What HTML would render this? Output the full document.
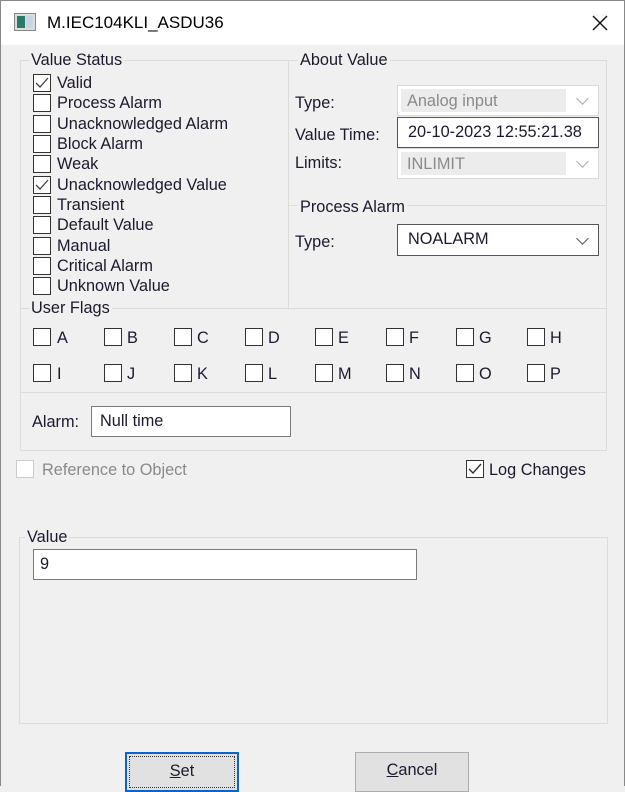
<!DOCTYPE html>
<html><head><meta charset="utf-8"><style>
*{box-sizing:border-box;margin:0;padding:0}
body{width:625px;height:786px;overflow:hidden;background:#f0f0f0;font-family:"Liberation Sans",sans-serif;font-size:16.3px;color:#1a1a2e;position:relative}
.a{position:absolute}
.win{position:absolute;left:0;top:0;width:625px;height:786px;border:1px solid #888;border-bottom:none}
.title{position:absolute;left:1px;top:1px;width:623px;height:44px;background:#fff}
.grp{position:absolute;border:1px solid #dcdcdc}
.lbl{position:absolute;background:#f0f0f0;padding:0 2px;line-height:18px;white-space:nowrap}
.cb{position:absolute;width:18px;height:18px;border:1.5px solid #333;background:#fff}
.t{position:absolute;line-height:18px;white-space:nowrap}
.edit{position:absolute;background:#fff;border:1px solid #7a7a7a;padding-left:10px;line-height:29px;white-space:nowrap;overflow:hidden}
.dis{position:absolute;background:#fff;border:1px solid #d8d8d8}
.dis span{position:absolute;left:3px;top:3px;right:32px;bottom:3px;background:#ececec;color:#8a8a8a;padding-left:6px;line-height:24px}
.chev{position:absolute;right:11px;top:8px;width:9px;height:9px;border-right:1.3px solid #555;border-bottom:1.3px solid #555;transform:rotate(45deg)}
.btn{position:absolute;background:#e1e1e1;border:1px solid #adadad;text-align:center;line-height:34px;height:40px}
</style></head><body>
<div class="win"></div>
<div class="title"></div>
<svg class="a" style="left:14px;top:13px" width="22" height="18"><rect x="0.5" y="0.5" width="21" height="17" fill="#ddd" stroke="#888"/><rect x="3" y="3" width="8" height="12" fill="#2a7a6a"/><rect x="12" y="3" width="7" height="12" fill="#c8d4e0"/></svg>
<div class="t" style="left:47px;top:14px;font-size:17px;color:#000">M.IEC104KLI_ASDU36</div>
<svg class="a" style="left:592px;top:15px" width="16" height="16"><path d="M1 1L15 15M15 1L1 15" stroke="#111" stroke-width="1.4"/></svg>

<div class="grp" style="left:20px;top:60px;width:269px;height:250px;border-bottom:none"></div>
<div class="lbl" style="left:29px;top:51px">Value Status</div>
<div class="grp" style="left:288px;top:60px;width:319px;height:250px;border-bottom:none"></div>
<div class="lbl" style="left:298px;top:51px">About Value</div>
<div class="a" style="left:289px;top:205px;width:318px;height:1px;background:#dcdcdc"></div>
<div class="lbl" style="left:298px;top:198px">Process Alarm</div>

<div class="cb" style="left:33px;top:74px"></div><svg class="a" style="left:35px;top:76px" width="14" height="14"><path d="M1 7L5 11L13 2" stroke="#444" fill="none" stroke-width="1.3"/></svg><div class="t" style="left:57px;top:74px">Valid</div>
<div class="cb" style="left:33px;top:94px"></div><div class="t" style="left:57px;top:94px">Process Alarm</div>
<div class="cb" style="left:33px;top:115px"></div><div class="t" style="left:57px;top:115px">Unacknowledged Alarm</div>
<div class="cb" style="left:33px;top:135px"></div><div class="t" style="left:57px;top:135px">Block Alarm</div>
<div class="cb" style="left:33px;top:155px"></div><div class="t" style="left:57px;top:155px">Weak</div>
<div class="cb" style="left:33px;top:176px"></div><svg class="a" style="left:35px;top:178px" width="14" height="14"><path d="M1 7L5 11L13 2" stroke="#444" fill="none" stroke-width="1.3"/></svg><div class="t" style="left:57px;top:176px">Unacknowledged Value</div>
<div class="cb" style="left:33px;top:196px"></div><div class="t" style="left:57px;top:196px">Transient</div>
<div class="cb" style="left:33px;top:216px"></div><div class="t" style="left:57px;top:216px">Default Value</div>
<div class="cb" style="left:33px;top:237px"></div><div class="t" style="left:57px;top:237px">Manual</div>
<div class="cb" style="left:33px;top:257px"></div><div class="t" style="left:57px;top:257px">Critical Alarm</div>
<div class="cb" style="left:33px;top:277px"></div><div class="t" style="left:57px;top:277px">Unknown Value</div>

<div class="t" style="left:295px;top:94px">Type:</div>
<div class="dis" style="left:397px;top:85px;width:202px;height:31px"><span>Analog input</span><div class="chev" style="border-color:#aaa"></div></div>
<div class="t" style="left:295px;top:126px">Value Time:</div>
<div class="edit" style="left:397px;top:117px;width:202px;height:31px;border-color:#555;padding-left:10px">20-10-2023 12:55:21.38</div>
<div class="t" style="left:295px;top:154px">Limits:</div>
<div class="dis" style="left:397px;top:148px;width:202px;height:31px"><span>INLIMIT</span><div class="chev" style="border-color:#aaa"></div></div>
<div class="t" style="left:295px;top:233px">Type:</div>
<div class="edit" style="left:397px;top:224px;width:202px;height:32px;border-color:#555">NOALARM<div class="chev" style="top:9px"></div></div>

<div class="grp" style="left:20px;top:308px;width:587px;height:143px"></div>
<div class="a" style="left:21px;top:392px;width:585px;height:1px;background:#dcdcdc"></div>
<div class="lbl" style="left:29px;top:299px">User Flags</div>
<div class="cb" style="left:33px;top:328px"></div><div class="t" style="left:57px;top:329px">A</div>
<div class="cb" style="left:104px;top:328px"></div><div class="t" style="left:127px;top:329px">B</div>
<div class="cb" style="left:174px;top:328px"></div><div class="t" style="left:197px;top:329px">C</div>
<div class="cb" style="left:245px;top:328px"></div><div class="t" style="left:268px;top:329px">D</div>
<div class="cb" style="left:315px;top:328px"></div><div class="t" style="left:338px;top:329px">E</div>
<div class="cb" style="left:386px;top:328px"></div><div class="t" style="left:409px;top:329px">F</div>
<div class="cb" style="left:456px;top:328px"></div><div class="t" style="left:479px;top:329px">G</div>
<div class="cb" style="left:527px;top:328px"></div><div class="t" style="left:550px;top:329px">H</div>
<div class="cb" style="left:33px;top:364px"></div><div class="t" style="left:57px;top:365px">I</div>
<div class="cb" style="left:104px;top:364px"></div><div class="t" style="left:127px;top:365px">J</div>
<div class="cb" style="left:174px;top:364px"></div><div class="t" style="left:197px;top:365px">K</div>
<div class="cb" style="left:245px;top:364px"></div><div class="t" style="left:268px;top:365px">L</div>
<div class="cb" style="left:315px;top:364px"></div><div class="t" style="left:338px;top:365px">M</div>
<div class="cb" style="left:386px;top:364px"></div><div class="t" style="left:409px;top:365px">N</div>
<div class="cb" style="left:456px;top:364px"></div><div class="t" style="left:479px;top:365px">O</div>
<div class="cb" style="left:527px;top:364px"></div><div class="t" style="left:550px;top:365px">P</div>
<div class="t" style="left:32px;top:413px">Alarm:</div>
<div class="edit" style="left:91px;top:406px;width:200px;height:31px;padding-left:8px">Null time</div>

<div class="cb" style="left:16px;top:460px;border:1px solid #ccc"></div>
<div class="t" style="left:42px;top:461px;color:#8a8a8a">Reference to Object</div>
<div class="cb" style="left:466px;top:460px"></div><svg class="a" style="left:468px;top:462px" width="14" height="14"><path d="M1 7L5 11L13 2" stroke="#333" fill="none" stroke-width="1.4"/></svg>
<div class="t" style="left:489px;top:461px">Log Changes</div>

<div class="grp" style="left:19px;top:537px;width:589px;height:187px"></div>
<div class="lbl" style="left:25px;top:528px">Value</div>
<div class="edit" style="left:33px;top:549px;width:384px;height:31px;padding-left:6px">9</div>

<div class="btn" style="left:125px;top:752px;width:114px;border:2px solid #0a64d0"><div style="position:absolute;left:2px;top:2px;right:2px;bottom:2px;border:1px dotted #333"></div><u>S</u>et</div>
<div class="btn" style="left:355px;top:752px;width:114px"><u>C</u>ancel</div>
</body></html>
